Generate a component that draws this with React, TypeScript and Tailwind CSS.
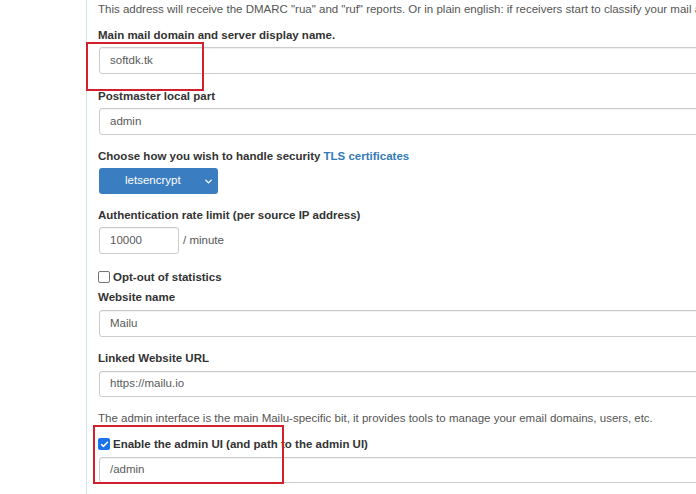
import { ChevronDown, Check } from "lucide-react";

const font = { fontFamily: '"Liberation Sans", Arial, sans-serif' };

function Label({ children, className = "" }: { children: React.ReactNode; className?: string }) {
  return <div className={`h-[14px] leading-[14px] text-[11.5px] font-bold text-[#333] whitespace-nowrap ${className}`}>{children}</div>;
}

function Field({ value, className = "", h = "h-[27px]" }: { value: string; className?: string; h?: string }) {
  return (
    <div className={`${h} w-[640px] border border-[#ccc] rounded-[3px] bg-white flex items-center pl-[10px] text-[11.5px] text-[#5a5a5a] shadow-[inset_0_1px_1px_rgba(0,0,0,0.06)] ${className}`}>
      {value}
    </div>
  );
}

export default function App() {
  return (
    <div className="relative w-[696px] h-[494px] overflow-hidden bg-white" style={font}>
      <div className="ml-[86px] h-full border-l border-[#d3e9e7] pl-[12px]">
        <div className="pt-[2px] h-[16px] leading-[14px] text-[11.5px] text-[#555] whitespace-nowrap overflow-hidden -ml-px">
          This address will receive the DMARC "rua" and "ruf" reports. Or in plain english: if receivers start to classify your mail as spam, this is where they'll report it.
        </div>
        <Label className="mt-[12px] -ml-px">Main mail domain and server display name.</Label>
        <Field value="softdk.tk" className="mt-[5px]" />
        <Label className="mt-[15px] -ml-px">Postmaster local part</Label>
        <Field value="admin" className="mt-[5px]" />
        <Label className="mt-[14px] -ml-px">
          Choose how you wish to handle security <span className="text-[#337ab7]">TLS certificates</span>
        </Label>
        <div className="mt-[5px] w-[119px] h-[26px] rounded-[3px] bg-[#3a7dc1] text-white text-[11.5px] flex items-center relative">
          <span className="ml-[26px]">letsencrypt</span>
          <ChevronDown className="absolute right-[4px] w-[11px] h-[11px]" strokeWidth={3} />
        </div>
        <Label className="mt-[14px] -ml-px">Authentication rate limit (per source IP address)</Label>
        <div className="mt-[5px] flex items-center gap-[4px]">
          <Field value="10000" className="!w-[80px]" />
          <span className="text-[11.5px] text-[#555]">/ minute</span>
        </div>
        <div className="mt-[16px] h-[14px] flex items-center gap-[3px] -ml-px">
          <span className="w-[12px] h-[12px] border border-[#767676] rounded-[2px] bg-white" />
          <span className="text-[11.5px] font-bold text-[#333] leading-[14px]">Opt-out of statistics</span>
        </div>
        <Label className="mt-[6px] -ml-px">Website name</Label>
        <Field value="Mailu" className="mt-[6px]" />
        <Label className="mt-[14px] -ml-px">Linked Website URL</Label>
        <Field value="https://mailu.io" h="h-[26px]" className="mt-[6px]" />
        <div className="mt-[14px] h-[14px] leading-[14px] text-[11.5px] text-[#555] whitespace-nowrap -ml-px">
          The admin interface is the main Mailu-specific bit, it provides tools to manage your email domains, users, etc.
        </div>
        <div className="mt-[12px] h-[14px] flex items-center gap-[3px] -ml-px">
          <span className="w-[12px] h-[12px] rounded-[2px] bg-[#1a73e8] flex items-center justify-center">
            <Check className="w-[9px] h-[9px] text-white" strokeWidth={4} />
          </span>
          <span className="text-[11.5px] font-bold text-[#333] leading-[14px]">Enable the admin UI (and path to the admin UI)</span>
        </div>
        <Field value="/admin" h="h-[26px]" className="mt-[6px]" />
      </div>
      <div className="absolute left-[86px] top-[42px] w-[118px] h-[49px] border-2 border-[#d4202c]" />
      <div className="absolute left-[93px] top-[425px] w-[191px] h-[59px] border-2 border-[#d4202c]" />
    </div>
  );
}
